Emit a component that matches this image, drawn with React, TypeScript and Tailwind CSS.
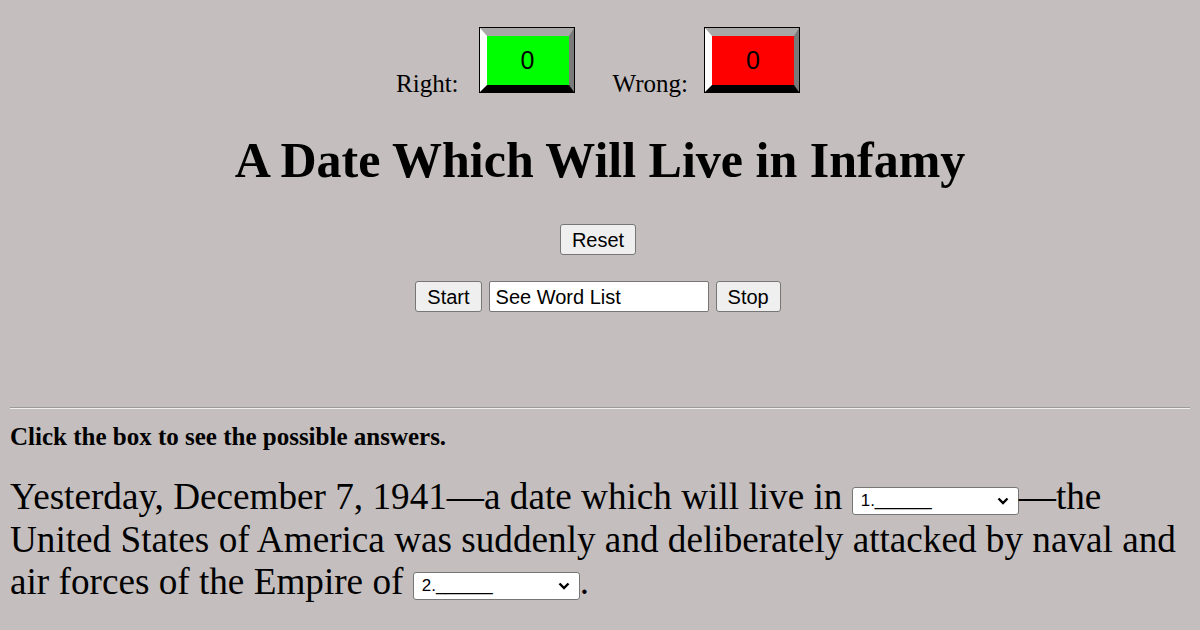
import React from 'react';

const Score: React.FC<{ color: string }> = ({ color }) => (
  <div className="border border-black">
    <div className="w-[94px] h-[64px] border-t-[8px] border-l-[7px] border-r-[5px] border-b-[7px] border-t-[#a8a8a8] border-l-white border-r-[#7a7a7a] border-b-black">
      <div className={`h-full w-full ${color} flex items-center justify-center text-[25px] leading-none font-['Liberation_Sans',Arial,sans-serif] text-black`}>
        0
      </div>
    </div>
  </div>
);

const Blank: React.FC<{ label: string }> = ({ label }) => (
  <span className="inline-flex items-center justify-between w-[167px] h-[28px] align-[3px] bg-white border border-[#767676] rounded-[3px] pl-[8px] pr-[9px] font-['Liberation_Sans',Arial,sans-serif] text-[17px] leading-none text-black">
    <span>{label}</span>
    <svg width="12" height="8" viewBox="0 0 12 8" fill="none">
      <path d="M1.5 1.5 L6 6 L10.5 1.5" stroke="black" strokeWidth="2.4" />
    </svg>
  </span>
);

const btn =
  "bg-[#efefef] border border-[#767676] rounded-[3px] px-[11px] h-[31px] text-[20px] text-black font-['Liberation_Sans',Arial,sans-serif] leading-none";

export default function App() {
  return (
    <div className="w-[1200px] h-[630px] overflow-hidden bg-[#c4bebe] font-['Liberation_Serif','Times_New_Roman',serif] text-black">
      {/* Scoreboard */}
      <div className="flex justify-center items-end pt-[27px] pr-[4px]">
        <span className="text-[25px] leading-none mb-[-3px] mr-[20px]">Right:</span>
        <Score color="bg-[#00ff00]" />
        <span className="text-[25px] leading-none mb-[-3px] ml-[38px] mr-[16px]">Wrong:</span>
        <Score color="bg-[#ff0000]" />
      </div>

      <h1 className="text-center font-bold text-[50px] leading-none mt-[42px]">
        A Date Which Will Live in Infamy
      </h1>

      <div className="flex justify-center mt-[39px] pr-[4px]">
        <button className={btn}>Reset</button>
      </div>

      <div className="flex justify-center gap-[7px] mt-[26px] pr-[4px]">
        <button className={btn}>Start</button>
        <div className="w-[220px] h-[31px] bg-white border border-[#767676] rounded-[2px] px-[6px] flex items-center text-[20px] font-['Liberation_Sans',Arial,sans-serif]">
          See Word List
        </div>
        <button className={btn}>Stop</button>
      </div>

      <div className="mx-[10px] mt-[95px] border-t border-t-[#9a9a9a] border-b border-b-[#eeeeee]" />

      <p className="px-[10px] mt-[15px] font-bold text-[25px] leading-none">
        Click the box to see the possible answers.
      </p>

      <p className="px-[10px] mt-[27px] text-[37.2px] leading-[42.5px]">
        Yesterday, December 7, 1941—a date which will live in <Blank label="1.______" />—the
        United States of America was suddenly and deliberately attacked by naval and air forces of the
        Empire of <Blank label="2.______" />.
      </p>
    </div>
  );
}
